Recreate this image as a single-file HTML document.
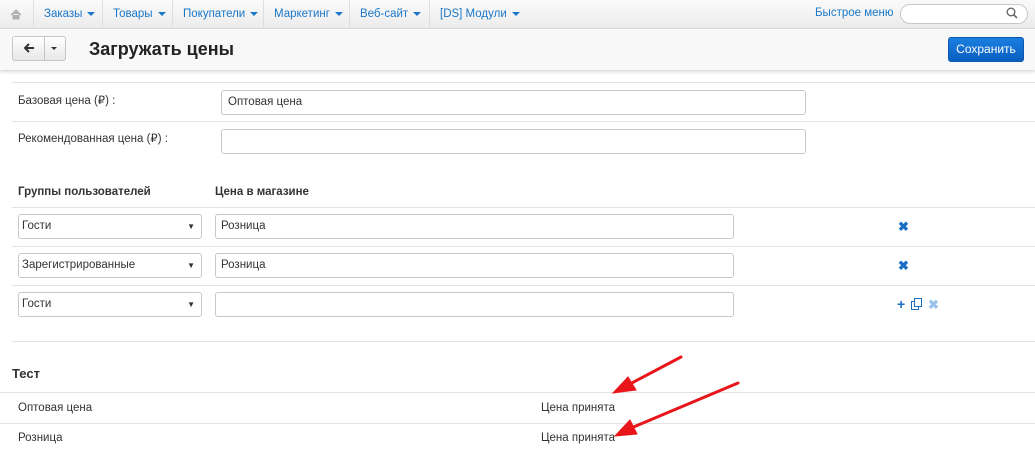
<!DOCTYPE html>
<html><head><meta charset="utf-8"><style>
*{box-sizing:border-box;margin:0;padding:0}
body{width:1035px;height:469px;overflow:hidden;background:#fff;font-family:"Liberation Sans",Arial,sans-serif;font-size:11.5px;color:#333;position:relative}
.abs{position:absolute}
.nav{left:0;top:0;width:1035px;height:29px;background:linear-gradient(#fafafa,#ececec);border-bottom:1px solid #d8d8d8}
.nav .it{position:absolute;top:0;height:29px;line-height:28px;color:#1a77c9;font-size:11.5px;border-left:1px solid #dedede;padding-left:10px}
.car{display:inline-block;width:0;height:0;border-left:4px solid transparent;border-right:4px solid transparent;border-top:4px solid #1a77c9;vertical-align:middle;margin-left:5px}
.tb{left:0;top:30px;width:1035px;height:40px;background:#f8f8f8;box-shadow:0 2px 3px rgba(0,0,0,.15)}
.in{position:absolute;height:25px;border:1px solid #c8c8c8;border-radius:3px;background:#fff;padding-left:6px;line-height:23px;font-size:11.5px;color:#333}
.hl{position:absolute;height:1px;background:#e2e2e2}
.lbl{position:absolute;font-size:11.5px;color:#333}
.b{font-weight:bold}
.x{position:absolute;color:#1a6fc4;font-weight:bold;font-size:13px}
</style></head><body>
<div class="abs nav">
 <svg class="abs" style="left:10px;top:9px" width="12" height="11"><path d="M1 6 L6 1 L11 6 M3 5 V10 H9 V5" fill="#b0b0b0" stroke="#b0b0b0"/></svg>
 <div class="it" style="left:33px;width:70px">Заказы<span class="car"></span></div>
 <div class="it" style="left:102px;width:70px">Товары<span class="car"></span></div>
 <div class="it" style="left:172px;width:92px">Покупатели<span class="car"></span></div>
 <div class="it" style="left:263px;width:86px">Маркетинг<span class="car"></span></div>
 <div class="it" style="left:349px;width:80px">Веб-сайт<span class="car"></span></div>
 <div class="it" style="left:429px;width:95px">[DS] Модули<span class="car"></span></div>
 <div class="abs" style="left:815px;top:7px;color:#1a77c9">Быстрое меню</div>
 <div class="abs" style="left:900px;top:4px;width:128px;height:20px;border:1px solid #c8c8c8;border-radius:10px;background:#fff"></div>
 <svg class="abs" style="left:1006px;top:7px" width="12" height="12"><circle cx="5" cy="5" r="3.8" stroke="#666" stroke-width="1.4" fill="none"/><line x1="8" y1="8" x2="11" y2="11" stroke="#666" stroke-width="1.6"/></svg>
</div>
<div class="abs tb">
 <div class="abs" style="left:12px;top:6px;width:54px;height:25px;border:1px solid #c6c6c6;border-radius:3px;background:linear-gradient(#fff,#e8e8e8)"></div>
 <div class="abs" style="left:44px;top:6px;width:1px;height:25px;background:#c6c6c6"></div>
 <svg class="abs" style="left:23px;top:13px" width="12" height="10"><path d="M11 5 H2 M6 1 L2 5 L6 9" stroke="#333" stroke-width="2" fill="none"/></svg>
 <div class="abs" style="left:51px;top:17px;border-left:3px solid transparent;border-right:3px solid transparent;border-top:3px solid #333"></div>
 <div class="abs" style="left:89px;top:9px;font-size:18px;font-weight:bold;color:#222">Загружать цены</div>
 <div class="abs" style="left:948px;top:7px;width:76px;height:25px;background:linear-gradient(#1a7fe0,#0a5fc0);border:1px solid #0a58b0;border-radius:3px;color:#fff;text-align:center;line-height:23px;font-size:12px">Сохранить</div>
</div>
<div class="hl" style="left:12px;top:82px;width:1023px"></div>
<div class="lbl" style="left:18px;top:93px">Базовая цена (₽) :</div>
<div class="in" style="left:221px;top:90px;width:585px">Оптовая цена</div>
<div class="hl" style="left:12px;top:121px;width:1023px"></div>
<div class="lbl" style="left:18px;top:131px">Рекомендованная цена (₽) :</div>
<div class="in" style="left:221px;top:129px;width:585px"></div>
<div class="lbl b" style="left:18px;top:186px">Группы пользователей</div>
<div class="lbl b" style="left:215px;top:186px">Цена в магазине</div>
<div class="hl" style="left:12px;top:207px;width:1023px"></div>
<div class="in" style="left:18px;top:214px;width:184px;padding-left:3px">Гости<span style="position:absolute;right:6px;font-size:8px">&#9660;</span></div>
<div class="in" style="left:215px;top:214px;width:519px;padding-left:5px">Розница</div>
<div class="x" style="left:898px;top:219px">&#10006;</div>
<div class="hl" style="left:12px;top:246px;width:1023px"></div>
<div class="in" style="left:18px;top:253px;width:184px;padding-left:3px">Зарегистрированные<span style="position:absolute;right:6px;font-size:8px">&#9660;</span></div>
<div class="in" style="left:215px;top:253px;width:519px;padding-left:5px">Розница</div>
<div class="x" style="left:898px;top:258px">&#10006;</div>
<div class="hl" style="left:12px;top:285px;width:1023px"></div>
<div class="in" style="left:18px;top:292px;width:184px;padding-left:3px">Гости<span style="position:absolute;right:6px;font-size:8px">&#9660;</span></div>
<div class="in" style="left:215px;top:292px;width:519px"></div>
<div class="x" style="left:897px;top:296px;font-size:14px">+</div>
<svg class="abs" style="left:911px;top:298px" width="12" height="12"><rect x="0.5" y="3.5" width="7" height="8" fill="none" stroke="#1a6fc4"/><rect x="3.5" y="0.5" width="7" height="8" fill="#fff" stroke="#1a6fc4"/></svg>
<div class="x" style="left:928px;top:297px;color:#9cc3e8">&#10006;</div>
<div class="hl" style="left:12px;top:341px;width:1023px"></div>
<div class="lbl b" style="left:12px;top:366px;font-size:13px">Тест</div>
<div class="hl" style="left:0;top:392px;width:1035px"></div>
<div class="lbl" style="left:18px;top:402px">Оптовая цена</div>
<div class="lbl" style="left:541px;top:402px">Цена принята</div>
<div class="hl" style="left:0;top:423px;width:1035px"></div>
<div class="lbl" style="left:18px;top:432px">Розница</div>
<div class="lbl" style="left:541px;top:432px">Цена принята</div>
<svg class="abs" style="left:0;top:0" width="1035" height="469">
<g stroke="#e8161b" stroke-width="3" fill="#e8161b" stroke-linecap="round">
<line x1="681" y1="357" x2="628" y2="385"/>
<polygon points="613,393 628,377 636,390" stroke-width="1"/>
<line x1="738" y1="383" x2="631" y2="428"/>
<polygon points="615,436 630,420 637,434" stroke-width="1"/>
</g></svg>
</body></html>
